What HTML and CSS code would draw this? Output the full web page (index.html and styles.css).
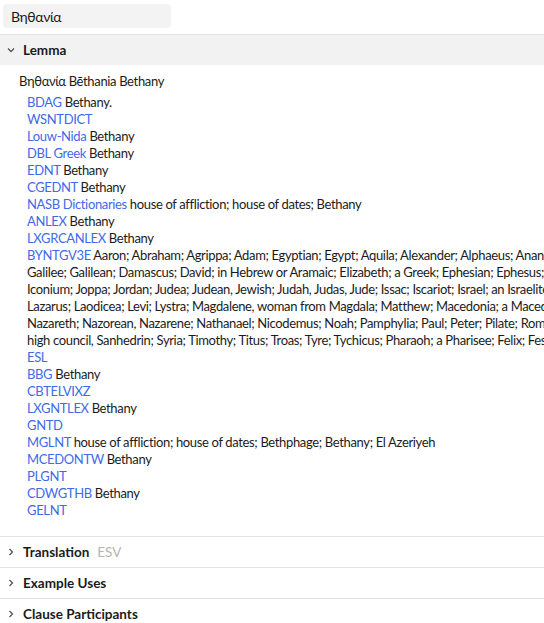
FILE: index.html
```html
<!DOCTYPE html>
<html lang="en">
<head>
    <meta charset="UTF-8">
    <meta name="viewport" content="width=device-width, initial-scale=1.0">
    <title>Βηθανία</title>
    <link rel="stylesheet" href="styles.css">
</head>
<body>
    <div class="search-bar">
        <input type="text" class="search" value="Βηθανία">
    </div>

    <div class="section open">
        <div class="section-head">
            <svg class="chevron" width="8" height="8" viewBox="0 0 8 8"><path d="M1 2.5 L4 5.5 L7 2.5" fill="none" stroke="#555" stroke-width="1.3"/></svg>
            <span class="title">Lemma</span>
        </div>
        <div class="section-body">
            <div class="lemma">Βηθανία Bēthania Bethany</div>
            <ul class="entries">
                <li><a href="#">BDAG</a> Bethany.</li>
                <li><a href="#">WSNTDICT</a></li>
                <li><a href="#">Louw-Nida</a> Bethany</li>
                <li><a href="#">DBL Greek</a> Bethany</li>
                <li><a href="#">EDNT</a> Bethany</li>
                <li><a href="#">CGEDNT</a> Bethany</li>
                <li><a href="#">NASB Dictionaries</a> house of affliction; house of dates; Bethany</li>
                <li><a href="#">ANLEX</a> Bethany</li>
                <li><a href="#">LXGRCANLEX</a> Bethany</li>
                <li class="long"><a href="#">BYNTGV3E</a> Aaron; Abraham; Agrippa; Adam; Egyptian; Egypt; Aquila; Alexander; Alphaeus; Ananias; Andrew; Antioch; Asia; Barnabas; Bethany<br>Galilee; Galilean; Damascus; David; in Hebrew or Aramaic; Elizabeth; a Greek; Ephesian; Ephesus; Gentile; Herod<br>Iconium; Joppa; Jordan; Judea; Judean, Jewish; Judah, Judas, Jude; Issac; Iscariot; Israel; an Israelite; Jerusalem<br>Lazarus; Laodicea; Levi; Lystra; Magdalene, woman from Magdala; Matthew; Macedonia; a Macedonian; Mary<br>Nazareth; Nazorean, Nazarene; Nathanael; Nicodemus; Noah; Pamphylia; Paul; Peter; Pilate; Rome; Roman<br>high council, Sanhedrin; Syria; Timothy; Titus; Troas; Tyre; Tychicus; Pharaoh; a Pharisee; Felix; Festus</li>
                <li><a href="#">ESL</a></li>
                <li><a href="#">BBG</a> Bethany</li>
                <li><a href="#">CBTELVIXZ</a></li>
                <li><a href="#">LXGNTLEX</a> Bethany</li>
                <li><a href="#">GNTD</a></li>
                <li><a href="#">MGLNT</a> house of affliction; house of dates; Bethphage; Bethany; El Azeriyeh</li>
                <li><a href="#">MCEDONTW</a> Bethany</li>
                <li><a href="#">PLGNT</a></li>
                <li><a href="#">CDWGTHB</a> Bethany</li>
                <li><a href="#">GELNT</a></li>
            </ul>
        </div>
    </div>

    <div class="section">
        <div class="section-head">
            <svg class="chevron" width="8" height="8" viewBox="0 0 8 8"><path d="M2.5 1 L5.5 4 L2.5 7" fill="none" stroke="#555" stroke-width="1.3"/></svg>
            <span class="title">Translation</span>
            <span class="note">ESV</span>
        </div>
    </div>
    <div class="section">
        <div class="section-head">
            <svg class="chevron" width="8" height="8" viewBox="0 0 8 8"><path d="M2.5 1 L5.5 4 L2.5 7" fill="none" stroke="#555" stroke-width="1.3"/></svg>
            <span class="title">Example Uses</span>
        </div>
    </div>
    <div class="section">
        <div class="section-head">
            <svg class="chevron" width="8" height="8" viewBox="0 0 8 8"><path d="M2.5 1 L5.5 4 L2.5 7" fill="none" stroke="#555" stroke-width="1.3"/></svg>
            <span class="title">Clause Participants</span>
        </div>
    </div>
</body>
</html>
```

FILE: styles.css
```css
body {
    margin: 0;
    font-family: Lato, "Noto Sans", sans-serif;
    font-size: 13px;
    color: #1b1b1b;
    background: white;
    overflow: hidden;
}

.search-bar {
    padding: 4px 3px 6px;
}

.search {
    width: 168px;
    height: 24px;
    box-sizing: border-box;
    padding: 0 8px;
    border: none;
    border-radius: 4px;
    background-color: #f3f3f3;
    font-family: inherit;
    font-size: 14px;
    letter-spacing: -0.4px;
    color: #1b1b1b;
    outline: none;
}

.section {
    border-top: 1px solid #e3e3e3;
}

.section-head {
    display: flex;
    align-items: center;
    height: 30px;
    padding-left: 7px;
}

.open .section-head {
    background-color: #f2f2f2;
}

.chevron {
    margin-right: 8px;
}

.title {
    font-weight: bold;
    font-size: 13.5px;
}

.note {
    margin-left: 8px;
    color: #b5b5b5;
    font-size: 13.5px;
}

.section-body {
    padding: 8px 0 17px 19px;
    overflow: hidden;
    letter-spacing: -0.35px;
}

.lemma {
    line-height: 17px;
    margin-bottom: 4px;
}

.entries {
    list-style: none;
    margin: 0;
    padding: 0 0 0 8px;
    line-height: 17px;
}

.entries li {
    white-space: nowrap;
}

.entries a {
    color: #4169e8;
    text-decoration: none;
}
```
